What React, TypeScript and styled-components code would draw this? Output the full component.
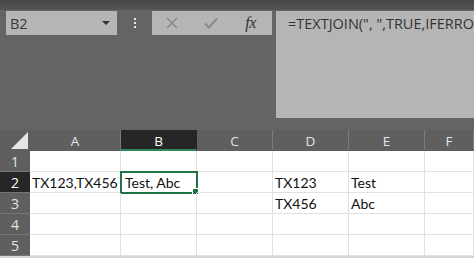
import styled, { createGlobalStyle } from "styled-components";

const GlobalStyle = createGlobalStyle`
	html, body {
		margin: 0;
		padding: 0;
		background: #646464;
	}
	* {
		box-sizing: border-box;
	}
`;

const Page = styled.div`
	width: 474px;
	height: 258px;
	overflow: hidden;
	background: #646464;
	display: flex;
	flex-direction: column;
	font-family: "Open Sans", "Noto Sans", sans-serif;
`;

const TopStrip = styled.div`
	flex-shrink: 0;
	height: 10px;
	background: linear-gradient(#474747, #555555);
`;

const FormulaArea = styled.div`
	flex-shrink: 0;
	height: 120px;
	display: flex;
	align-items: flex-start;
	padding: 1px 0 0 6px;
`;

const NameBox = styled.div`
	width: 111px;
	height: 24px;
	background: #b5b5b5;
	display: flex;
	align-items: center;
	justify-content: space-between;
	padding: 0 7px 0 4px;
	color: #3a3a3a;
	font-size: 14.5px;
`;

const DropArrow = styled.span`
	width: 0;
	height: 0;
	border-left: 4px solid transparent;
	border-right: 4px solid transparent;
	border-top: 4px solid #333;
`;

const Grip = styled.div`
	width: 35px;
	height: 24px;
	display: flex;
	flex-direction: column;
	align-items: center;
	justify-content: center;
	gap: 2px;
`;

const GripDot = styled.span`
	width: 2px;
	height: 2px;
	background: #e6e6e6;
`;

const ButtonBox = styled.div`
	width: 120px;
	height: 24px;
	background: #b5b5b5;
	display: flex;
	align-items: center;
`;

const IconButton = styled.div<{ $w: number }>`
	width: ${(p) => p.$w}px;
	height: 24px;
	display: flex;
	align-items: center;
	justify-content: center;
`;

const Fx = styled.span`
	font-family: "Liberation Serif", serif;
	font-style: italic;
	font-size: 16px;
	color: #333;
	letter-spacing: -0.5px;
`;

const FormulaBar = styled.div`
	flex: 1;
	margin-left: 4px;
	height: 107px;
	background: #b5b5b5;
	padding: 3px 0 0 12px;
	color: #333;
	font-size: 14.5px;
	line-height: 20px;
	white-space: nowrap;
	overflow: hidden;
`;

const Sheet = styled.div`
	flex-shrink: 0;
	display: grid;
	grid-template-columns: 30px 91px 76px 76px 76px 76px 1fr;
	grid-auto-rows: 21px;
	background: #fff;
`;

const Corner = styled.div`
	background: #5f5f5f;
	display: flex;
	align-items: flex-end;
	justify-content: flex-end;
	padding: 0 2px 2px 0;
`;

const ColHead = styled.div<{ $sel?: boolean }>`
	background: ${(p) => (p.$sel ? "#262626" : "#5f5f5f")};
	border-right: 1px solid ${(p) => (p.$sel ? "#262626" : "#7c7c7c")};
	border-bottom: 2px solid ${(p) => (p.$sel ? "#2f8a5a" : "#5f5f5f")};
	color: ${(p) => (p.$sel ? "#ffffff" : "#e4e4e4")};
	font-size: 13.5px;
	display: flex;
	align-items: center;
	justify-content: center;
	padding-top: 2px;
`;

const RowHead = styled.div<{ $sel?: boolean }>`
	background: ${(p) => (p.$sel ? "#262626" : "#5f5f5f")};
	border-bottom: 1px solid #747474;
	color: ${(p) => (p.$sel ? "#ffffff" : "#e4e4e4")};
	font-size: 14px;
	display: flex;
	align-items: center;
	justify-content: center;
`;

const Cell = styled.div<{ $sel?: boolean }>`
	position: relative;
	border-right: 1px solid #e1e1e1;
	border-bottom: 1px solid #e1e1e1;
	font-family: "Lato", "Noto Sans", sans-serif;
	font-size: 14px;
	color: #111;
	padding: 0 0 0 2px;
	display: flex;
	align-items: center;
	white-space: nowrap;
	${(p) =>
		p.$sel &&
		`
		outline: 2px solid #217346;
		outline-offset: -1px;
		padding-left: 4px;
		&::after {
			content: "";
			position: absolute;
			right: -3px;
			bottom: -3px;
			width: 5px;
			height: 5px;
			background: #217346;
			border: 1px solid #fff;
		}
	`}
`;

const ScrollStrip = styled.div`
	flex-shrink: 0;
	height: 4px;
	background: #d6d6d6;
`;

const columns = ["A", "B", "C", "D", "E", "F"];

const data: Record<number, string[]> = {
	2: ["TX123,TX456", "Test, Abc", "", "TX123", "Test", ""],
	3: ["", "", "", "TX456", "Abc", ""],
};

function App() {
	const rows = [1, 2, 3, 4, 5];
	return (
		<>
			<GlobalStyle />
			<Page>
				<TopStrip />
				<FormulaArea>
					<NameBox>
						<span>B2</span>
						<DropArrow />
					</NameBox>
					<Grip>
						<GripDot />
						<GripDot />
						<GripDot />
					</Grip>
					<ButtonBox>
						<IconButton $w={40}>
							<svg width="12" height="12" viewBox="0 0 12 12">
								<path d="M1 1L11 11M11 1L1 11" stroke="#8a8a8a" strokeWidth="1.6" />
							</svg>
						</IconButton>
						<IconButton $w={37}>
							<svg width="14" height="12" viewBox="0 0 14 12">
								<path d="M1 6.5L5 10.5L13 1.5" stroke="#8a8a8a" strokeWidth="2" fill="none" />
							</svg>
						</IconButton>
						<IconButton $w={43}>
							<Fx>fx</Fx>
						</IconButton>
					</ButtonBox>
					<FormulaBar>=TEXTJOIN(", ",TRUE,IFERROR(</FormulaBar>
				</FormulaArea>
				<Sheet>
					<Corner>
						<svg width="17" height="17" viewBox="0 0 17 17">
							<polygon points="17,0 17,17 0,17" fill="#e6e6e6" />
						</svg>
					</Corner>
					{columns.map((c) => (
						<ColHead key={c} $sel={c === "B"}>
							{c}
						</ColHead>
					))}
					{rows.map((r) => (
						<>
							<RowHead key={`h${r}`} $sel={r === 2}>
								{r}
							</RowHead>
							{columns.map((c, i) => (
								<Cell key={`${c}${r}`} $sel={r === 2 && c === "B"}>
									{data[r]?.[i] ?? ""}
								</Cell>
							))}
						</>
					))}
				</Sheet>
				<ScrollStrip />
			</Page>
		</>
	);
}

export default App;
